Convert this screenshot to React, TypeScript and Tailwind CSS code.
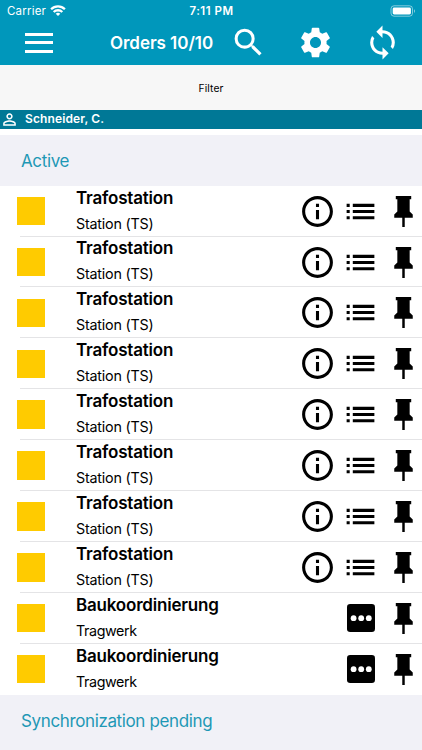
import type { ReactNode } from 'react';
import { MdSearch, MdSettings, MdSync, MdOutlineInfo, MdList, MdPersonOutline } from 'react-icons/md';

interface Order {
  id: number;
  title: string;
  subtitle: string;
  hasDetails: boolean;
}

const STATIONS: Order[] = Array.from({ length: 8 }, (_, i) => ({
  id: i,
  title: 'Trafostation',
  subtitle: 'Station (TS)',
  hasDetails: true
}));

const ORDERS: Order[] = [
  ...STATIONS,
  { id: 8, title: 'Baukoordinierung', subtitle: 'Tragwerk', hasDetails: false },
  { id: 9, title: 'Baukoordinierung', subtitle: 'Tragwerk', hasDetails: false }
];

function PinIcon() {
  return (
    <svg viewBox="0 0 24 24" className="size-[37px]" fill="currentColor">
      <path d="M16 12V4h1V2H7v2h1v8l-2 2v2h5.2v6h1.6v-6H18v-2l-2-2Z" />
    </svg>
  );
}

function MoreBoxIcon() {
  return (
    <svg viewBox="0 0 28 28" className="size-[28px]">
      <rect width="28" height="28" rx="3.2" fill="#000" />
      <circle cx="6.6" cy="14.2" r="2.9" fill="#fff" />
      <circle cx="14.2" cy="14.2" r="2.9" fill="#fff" />
      <circle cx="21.8" cy="14.2" r="2.9" fill="#fff" />
    </svg>
  );
}

function StatusBar() {
  return (
    <div className="grid h-[22px] grid-cols-3 items-center pl-[7px] pr-[6px] text-[11.5px] leading-none">
      <div className="flex items-center gap-[4px]">
        <span className="pt-[2px] tracking-[0.2px]">Carrier</span>
        <svg viewBox="0 0 16 12" className="h-[12px] w-[16px]" fill="none" stroke="#fff" strokeWidth="2.3">
          <path d="M1.1 4.3a9.8 9.8 0 0 1 13.8 0" />
          <path d="M3.7 7a6.1 6.1 0 0 1 8.6 0" />
          <path d="M8 11.1 5.7 8.8a3.3 3.3 0 0 1 4.6 0Z" fill="#fff" stroke="none" />
        </svg>
      </div>
      <span className="pt-[2px] text-center font-semibold tracking-[0.5px]">7:11 PM</span>
      <svg viewBox="0 0 26 12" className="h-[12px] w-[26px] justify-self-end">
        <rect x="1" y="0.8" width="21.5" height="10.4" rx="3" fill="none" stroke="#fff" strokeOpacity="0.5" />
        <rect x="2.7" y="2.5" width="18.2" height="7" rx="1.4" fill="#fff" />
        <path d="M24 4.2v3.6c1.2-.5 1.2-3.1 0-3.6Z" fill="#fff" fillOpacity="0.6" />
      </svg>
    </div>
  );
}

function Toolbar() {
  return (
    <div className="flex h-[41.5px] items-center pl-[24.7px]">
      <div className="flex w-[28.8px] flex-col gap-[5.3px]">
        <div className="h-[3px] bg-white" />
        <div className="h-[3px] bg-white" />
        <div className="h-[3px] bg-white" />
      </div>
      <h1 className="ml-[56.5px] w-[120px] whitespace-nowrap pt-[1px] text-[17px] font-semibold tracking-[-0.05px]">
        Orders 10/10
      </h1>
      <MdSearch className="size-[37px] shrink-0" />
      <MdSettings className="ml-[30.5px] size-[37px] shrink-0" />
      <MdSync className="ml-[30px] size-[37px] shrink-0" />
    </div>
  );
}

function SectionHeader({ children }: { children: ReactNode }) {
  return (
    <div className="flex h-[51px] shrink-0 items-center bg-[#f1f1f7] pl-[21px] pt-[3px] text-[17px] tracking-[-0.37px] text-[#1e98b5]">
      {children}
    </div>
  );
}

function OrderRow({ order, isLast }: { order: Order; isLast: boolean }) {
  return (
    <li className="relative flex h-[50.9px] items-center">
      <div className="ml-[16.5px] size-[28.5px] bg-[#ffcb00]" />
      <div className="ml-[31px] flex-1 whitespace-nowrap">
        <div className="-mt-[0.2px] text-[17px] font-semibold leading-[24px] tracking-[-0.2px]">{order.title}</div>
        <div className={`text-[14.3px] leading-[27px] ${order.hasDetails ? 'tracking-[-0.2px]' : 'tracking-[-0.4px]'}`}>
          {order.subtitle}
        </div>
      </div>
      <div className="flex items-center pr-[0.5px]">
        {order.hasDetails ? (
          <>
            <MdOutlineInfo className="size-[37px]" />
            <MdList className="ml-[6px] size-[37px]" />
          </>
        ) : (
          <div className="flex w-[37px] justify-center">
            <MoreBoxIcon />
          </div>
        )}
        <div className="ml-[5.5px]">
          <PinIcon />
        </div>
      </div>
      {!isLast && <div className="absolute bottom-0 left-[20px] right-0 h-px bg-[#e4e4e6]" />}
    </li>
  );
}

export default function App() {
  return (
    <div className="flex h-[750px] w-[422px] flex-col overflow-hidden bg-white font-['Inter',sans-serif] text-black">
      <header className="h-[65.3px] shrink-0 bg-[#0097bb] text-white">
        <StatusBar />
        <Toolbar />
      </header>

      <div className="flex h-[44.7px] shrink-0 items-center justify-center bg-[#f7f7f7] pt-[1.5px] text-[10.3px] tracking-[0.1px]">
        Filter
      </div>

      {/* Assigned user */}
      <div className="flex h-[18.7px] shrink-0 items-center bg-[#007896] text-[12px] font-semibold text-white">
        <MdPersonOutline className="size-[19px]" />
        <span className="-mt-[1px] ml-[6px] tracking-[0.13px]">Schneider, C.</span>
      </div>

      <div className="mt-[6px]">
        <SectionHeader>Active</SectionHeader>
      </div>
      <ul className="shrink-0">
        {ORDERS.map((order, i) => (
          <OrderRow key={order.id} order={order} isLast={i === ORDERS.length - 1} />
        ))}
      </ul>
      <div className="flex-1 bg-[#f1f1f7]">
        <SectionHeader>Synchronization pending</SectionHeader>
      </div>
    </div>
  );
}
